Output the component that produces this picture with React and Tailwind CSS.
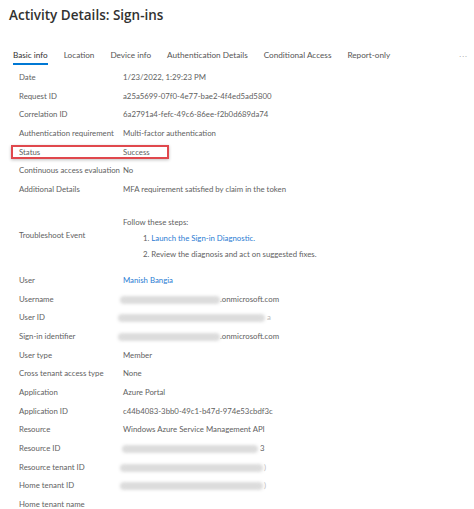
import React from "react";

const tabs = [
  "Basic info",
  "Location",
  "Device info",
  "Authentication Details",
  "Conditional Access",
  "Report-only",
];

function Blur({ w }) {
  return (
    <span
      className="inline-block h-[8px] bg-[#dcdcdc] blur-[1.5px] rounded-sm align-middle"
      style={{ width: w }}
    />
  );
}

function Row({ label, children, boxed }) {
  return (
    <div className="relative flex items-center h-[18.67px]">
      <div className="w-[104px] shrink-0 whitespace-nowrap text-[#616161]">{label}</div>
      <div className="flex items-center whitespace-nowrap text-[#616161]">{children}</div>
      {boxed && (
        <div className="absolute left-[-8px] top-[1.5px] w-[158px] h-[14px] border-2 border-[#e0484d] shadow-[0_1px_3px_rgba(0,0,0,0.25)]" />
      )}
    </div>
  );
}

export default function App() {
  const topRows = [
    ["Date", "1/23/2022, 1:29:23 PM"],
    ["Request ID", "a25a5699-07f0-4e77-bae2-4f4ed5ad5800"],
    ["Correlation ID", "6a2791a4-fefc-49c6-86ee-f2b0d689da74"],
    ["Authentication requirement", "Multi-factor authentication"],
  ];

  return (
    <div
      className="w-[474px] h-[509px] overflow-hidden bg-white text-[7.8px]"
      style={{ fontFamily: "Lato, 'Open Sans', sans-serif" }}
    >
      {/* Header */}
      <div className="h-[46px] pl-[9px] pt-[5px]">
        <h1
          className="text-[13.5px] font-semibold text-[#323130] leading-[20px]"
          style={{ fontFamily: "'Open Sans', sans-serif" }}
        >
          Activity Details: Sign-ins
        </h1>
      </div>

      {/* Tabs */}
      <div className="flex items-start h-[22.67px] pl-[13px] pr-[6px] text-[8.2px]">
        <div className="flex gap-[16px] text-[#555]">
          {tabs.map((t, i) => (
            <div key={t} className="flex flex-col">
              <span className={`leading-[18px] ${i === 0 ? "text-[#323130]" : ""}`}>{t}</span>
              {i === 0 && <span className="h-[2px] bg-[#0078d4] mt-[-1px]" />}
            </div>
          ))}
        </div>
        <span className="ml-auto leading-[16px] text-[#aaa] tracking-[1px]">...</span>
      </div>

      {/* Properties */}
      <div className="pl-[19px]">
        {topRows.map(([l, v]) => (
          <Row key={l} label={l}>{v}</Row>
        ))}
        <Row label="Status" boxed>Success</Row>
        <Row label="Continuous access evaluation">No</Row>
        <Row label="Additional Details">MFA requirement satisfied by claim in the token</Row>

        <div className="flex items-center h-[72.4px]">
          <div className="w-[104px] shrink-0 text-[#616161]">Troubleshoot Event</div>
          <div className="self-start pt-[14.5px] text-[#616161]">
            <div className="leading-[16px]">Follow these steps:</div>
            <div className="leading-[16px] pl-[20px]">
              1. <span className="text-[#2b7cd3]">Launch the Sign-in Diagnostic.</span>
            </div>
            <div className="leading-[16px] pl-[20px]">
              2. Review the diagnosis and act on suggested fixes.
            </div>
          </div>
        </div>

        <Row label="User"><span className="text-[#2b7cd3]">Manish Bangia</span></Row>
        <Row label="Username">
          <span className="ml-[-3px]"><Blur w="100px" /></span>.onmicrosoft.com
        </Row>
        <Row label="User ID">
          <span className="ml-[-5px]"><Blur w="147px" /></span>
          <span className="text-[#bbb] ml-[2px]">a</span>
        </Row>
        <Row label="Sign-in identifier">
          <span className="ml-[-5px]"><Blur w="102px" /></span>.onmicrosoft.com
        </Row>
        <Row label="User type">Member</Row>
        <Row label="Cross tenant access type">None</Row>
        <Row label="Application">Azure Portal</Row>
        <Row label="Application ID">c44b4083-3bb0-49c1-b47d-974e53cbdf3c</Row>
        <Row label="Resource">Windows Azure Service Management API</Row>
        <Row label="Resource ID">
          <span className="ml-[-1px]"><Blur w="136px" /></span>
          <span className="ml-[2px]">3</span>
        </Row>
        <Row label="Resource tenant ID">
          <span className="ml-[-3px]"><Blur w="143px" /></span>
          <span className="text-[#bbb] ml-[1px]">)</span>
        </Row>
        <Row label="Home tenant ID">
          <span className="ml-[-3px]"><Blur w="143px" /></span>
          <span className="text-[#bbb] ml-[1px]">)</span>
        </Row>
        <Row label="Home tenant name" />
      </div>
    </div>
  );
}
